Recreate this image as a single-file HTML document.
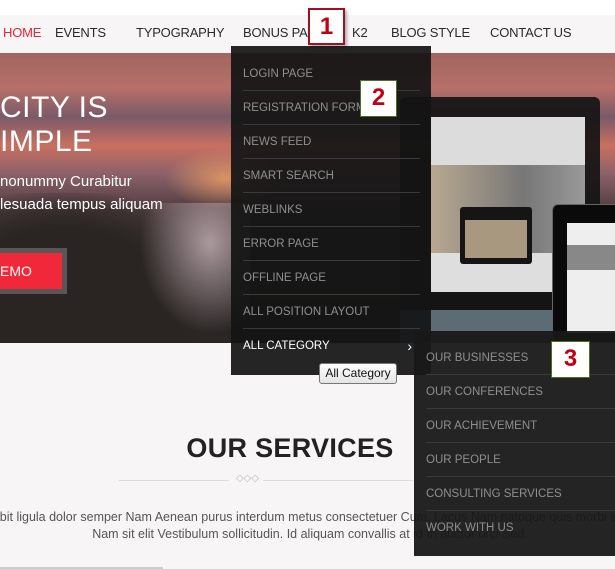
<!DOCTYPE html>
<html><head><meta charset="utf-8"><style>
*{margin:0;padding:0;box-sizing:border-box}
body{width:615px;height:569px;overflow:hidden;background:#f7f5f6;font-family:"Liberation Sans",sans-serif;position:relative}
.a{position:absolute}
.top{left:0;top:0;width:615px;height:15px;background:#fff}
.nav{left:0;top:15px;width:615px;height:38px;background:#f7f5f6}
.nav span{position:absolute;top:10px;font-size:13px;color:#2b2b2b;letter-spacing:-.2px}
.hero{left:0;top:53px;width:615px;height:290px;overflow:hidden;
background:
radial-gradient(ellipse 60px 30px at 225px 125px,rgba(240,160,100,.8),transparent),
linear-gradient(180deg,#a06560 0%,#b77068 12%,#7a5a68 22%,#c87060 32%,#8a6068 42%,#4a3a3c 55%,#2e2a2a 75%,#2a2624 100%)}
.rock{left:-40px;top:140px;width:260px;height:200px;background:radial-gradient(ellipse at 40% 60%,#2a2522 50%,transparent 75%)}
.sky{left:120px;top:150px;width:130px;height:150px;background:radial-gradient(ellipse 70px 90px at 90px 40px,rgba(190,170,175,.85),transparent)}
.h1{left:0;top:38px;color:#fff;font-size:30px;line-height:34px;letter-spacing:.5px}
.p{left:0;top:117px;color:#fff;font-size:15px;line-height:23px}
.btn{left:-10px;top:195px;width:77px;height:46px;background:#5a5556}
.btn div{position:absolute;left:10px;top:5px;width:62px;height:36px;background:#f0283a;color:#fff;font-size:14px;line-height:36px}
.dd{left:231px;top:46px;width:200px;height:329px;background:rgba(20,20,20,.93)}
.dd div,.sub div{position:absolute;left:12px;width:177px;height:34px;border-bottom:1px solid #3a3a3a;color:#8f8f8f;font-size:11.5px;line-height:34px;text-transform:uppercase}
.sub{left:414px;top:331px;width:201px;height:225px;background:rgba(24,24,24,.95)}
.sub div{width:190px}
.box{background:#fff;font:bold 24px "Liberation Sans",sans-serif;color:#c00010;text-align:center;line-height:34px}
</style></head><body>
<div class="a top"></div>
<div class="a nav">
<span style="left:3px;color:#e4253a">HOME</span>
<span style="left:55px">EVENTS</span>
<span style="left:136px">TYPOGRAPHY</span>
<span style="left:243px">BONUS PAGE</span>
<span style="left:352px">K2</span>
<span style="left:391px">BLOG STYLE</span>
<span style="left:490px">CONTACT US</span>
</div>
<div class="a hero">
<div class="a rock"></div>
<div class="a sky"></div>
<div class="a" style="left:400px;top:44px;width:200px;height:213px;background:#121212;border-radius:6px;opacity:.9"></div>
<div class="a" style="left:431px;top:64px;width:154px;height:48px;background:#dcdcdc"></div>
<div class="a" style="left:431px;top:112px;width:154px;height:88px;background:linear-gradient(90deg,#b8a890,#777 60%,#999)"></div>
<div class="a" style="left:431px;top:200px;width:154px;height:39px;background:#dedede"></div>
<div class="a" style="left:460px;top:154px;width:72px;height:57px;background:#151515;border-radius:3px"></div>
<div class="a" style="left:465px;top:167px;width:62px;height:38px;background:#a89880"></div>
<div class="a" style="left:400px;top:257px;width:215px;height:33px;background:#5d6b74"></div>
<div class="a" style="left:552px;top:151px;width:70px;height:139px;background:#0a0a0a;border-radius:6px;border:1px solid #666"></div>
<div class="a" style="left:567px;top:170px;width:50px;height:110px;background:#eee"></div>
<div class="a" style="left:567px;top:192px;width:50px;height:25px;background:#888"></div>
<div class="a h1">CITY IS<br>IMPLE</div>
<div class="a p">nonummy Curabitur<br>lesuada tempus aliquam</div>
<div class="a btn"><div>EMO</div></div>
</div>
<div class="a dd">
<div style="top:11px">Login Page</div>
<div style="top:45px">Registration Form</div>
<div style="top:79px">News Feed</div>
<div style="top:113px">Smart Search</div>
<div style="top:147px">Weblinks</div>
<div style="top:181px">Error Page</div>
<div style="top:215px">Offline Page</div>
<div style="top:249px">All Position Layout</div>
<div style="top:283px;color:#fff;border:none">All Category<span style="position:absolute;right:8px;font-size:14px">›</span></div>
</div>
<div class="a" style="left:319px;top:363px;width:78px;height:21px;background:linear-gradient(#fff,#e4e4e4);border:1px solid #777;border-radius:3px;font-size:12px;line-height:19px;text-align:center;color:#111">All Category</div>
<div class="a" style="left:0;top:433px;width:580px;text-align:center;font-size:27px;font-weight:bold;color:#222;letter-spacing:.3px">OUR SERVICES</div>
<div class="a" style="left:119px;top:480px;width:110px;height:1px;background:#ddd"></div>
<div class="a" style="left:263px;top:480px;width:150px;height:1px;background:#ddd"></div>
<div class="a" style="left:235px;top:473px;width:25px;text-align:center;color:#bbb;font-size:10px">◇◇◇</div>
<div class="a" style="left:-10px;top:509px;width:640px;font-size:12.5px;line-height:17px;color:#555;text-align:center;white-space:nowrap">bit ligula dolor semper Nam Aenean purus interdum metus consectetuer Cum. Lacus Nam natoque quis morbi in<br>Nam sit elit Vestibulum sollicitudin. Id aliquam convallis at id In auctor orci Sed.</div>
<div class="a sub">
<div style="top:10px">Our Businesses</div>
<div style="top:44px">Our Conferences</div>
<div style="top:78px">Our Achievement</div>
<div style="top:112px">Our People</div>
<div style="top:146px">Consulting Services</div>
<div style="top:180px;border:none">Work With Us</div>
</div>
<div class="a" style="left:0;top:567px;width:163px;height:2px;background:#ccc"></div>
<div class="a box" style="left:308px;top:8px;width:37px;height:37px;border:2px solid #a01020;box-shadow:2px 2px 3px rgba(0,0,0,.3)">1</div>
<div class="a box" style="left:360px;top:80px;width:37px;height:37px;border:1px solid #4a7020">2</div>
<div class="a box" style="left:551px;top:341px;width:39px;height:37px;border:1px solid #4a7020">3</div>
</body></html>
